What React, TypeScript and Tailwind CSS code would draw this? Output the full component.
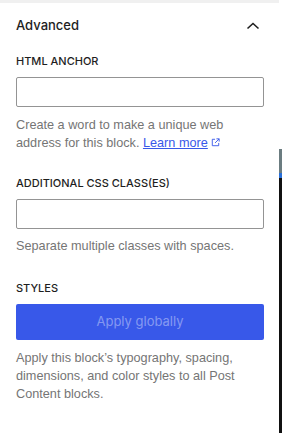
import React from 'react';

export default function App() {
  const font = { fontFamily: 'Inter, "Noto Sans", sans-serif' };
  const body = { fontFamily: '"Liberation Sans", Arial, sans-serif' };

  return (
    <div className="w-[282px] h-[433px] bg-white flex overflow-hidden" style={font}>
      {/* PANEL */}
      <div className="w-[279px] border-t-[3px] border-[#f0f0f0] px-4">
        <div className="flex items-center justify-between h-[45px] pt-[1px]">
          <span className="text-[13px] font-medium text-[#1e1e1e]">Advanced</span>
          <svg width="24" height="24" viewBox="0 0 24 24" className="mr-[-2px]">
            <path d="M6.5 14.5 12 9.5l5.5 5" fill="none" stroke="#1e1e1e" strokeWidth="1.6" />
          </svg>
        </div>

        {/* HTML ANCHOR */}
        <div className="mt-[5px] text-[11px] font-medium uppercase text-[#1e1e1e] leading-4">HTML anchor</div>
        <div className="mt-[8px] w-[248px] h-[30px] border border-[#949494] rounded-[2px]"></div>
        <p className="mt-[9px] text-[12.7px] leading-[18px] text-[#757575]" style={body}>
          Create a word to make a unique web address for this block.{' '}
          <a className="text-[#3858e9] underline">Learn more</a>
          <svg width="11" height="11" viewBox="0 0 24 24" className="inline-block ml-[2px] align-[-1px]">
            <path d="M19 13v6H5V5h6M14 4h6v6M20 4l-9 9" fill="none" stroke="#3858e9" strokeWidth="2" />
          </svg>
        </p>

        {/* ADDITIONAL CSS */}
        <div className="mt-[23px] text-[11px] font-medium uppercase text-[#1e1e1e] leading-4">Additional CSS class(es)</div>
        <div className="mt-[8px] w-[248px] h-[30px] border border-[#949494] rounded-[2px]"></div>
        <p className="mt-[8px] text-[12.7px] leading-[18px] text-[#757575]" style={body}>Separate multiple classes with spaces.</p>

        {/* STYLES */}
        <div className="mt-[25px] text-[11px] font-medium uppercase text-[#1e1e1e] leading-4">Styles</div>
        <div className="mt-[8px] w-[248px] h-[36px] bg-[#3858e9] rounded-[2px] flex items-center justify-center text-[13px] text-white/40">
          Apply globally
        </div>
        <p className="mt-[9px] text-[12.7px] leading-[18px] text-[#757575]" style={body}>
          Apply this block’s typography, spacing, dimensions, and color styles to all Post Content blocks.
        </p>
      </div>

      {/* EDGE STRIP */}
      <div className="w-[3px] mt-[149px] flex flex-col">
        <div className="h-[24px] bg-[#6b7c80]"></div>
        <div className="h-[5px] bg-[#2a6fd6]"></div>
        <div className="flex-1 bg-[#111]"></div>
      </div>
    </div>
  );
}
